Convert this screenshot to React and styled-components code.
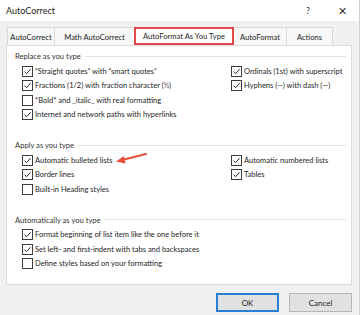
import styled, { createGlobalStyle } from "styled-components";

const GlobalStyle = createGlobalStyle`
  html, body {
    margin: 0;
    padding: 0;
    background: #f0f0f0;
  }
`;

const Window = styled.div`
  position: relative;
  width: 360px;
  height: 315px;
  overflow: hidden;
  background: #f0f0f0;
  font-family: "Segoe UI", Lato, "Open Sans", sans-serif;
  color: #1e1e1e;
  border-right: 1px solid #d0d0d0;
  box-sizing: border-box;
`;

const TitleBar = styled.div`
  display: flex;
  align-items: center;
  height: 21px;
  padding: 0 0 0 6px;
  background: #fff;
  font-size: 9px;
`;

const Title = styled.div`
  flex-grow: 1;
`;

const TitleButton = styled.div`
  width: 34px;
  text-align: center;
  font-size: ${(props) => props.size || 9}px;
  color: #333;
`;

const Body = styled.div`
  padding: 6px 7px 0 6px;
`;

const TabRow = styled.div`
  display: flex;
  height: 18px;
  padding-left: 2px;
`;

const Tab = styled.div`
  display: flex;
  align-items: center;
  justify-content: center;
  width: ${(props) => props.width}px;
  box-sizing: border-box;
  font-size: 7.6px;
  background: ${(props) => (props.active ? "#fff" : "#f7f7f7")};
  border: 1px solid #d9d9d9;
  border-bottom: none;
  margin-left: -1px;
  ${(props) =>
    props.active &&
    `
    border: 2px solid #e2474c;
    position: relative;
    z-index: 1;
  `}
`;

const Panel = styled.div`
  position: relative;
  height: 240px;
  box-sizing: border-box;
  background: #fff;
  border: 1px solid #dcdcdc;
  padding: 4px 5px 0 8px;
`;

const Section = styled.div`
  margin-bottom: 17px;
`;

const Header = styled.div`
  display: flex;
  align-items: center;
  height: 12px;
  font-size: 7.6px;
  color: #333;

  &::after {
    content: "";
    flex-grow: 1;
    height: 1px;
    margin-left: 4px;
    background: #e3e3e3;
  }
`;

const Rows = styled.div`
  display: grid;
  grid-template-columns: 209px 1fr;
  grid-auto-rows: 14.5px;
  margin-top: 2px;
  padding-left: 7px;
`;

const Row = styled.div`
  display: flex;
  align-items: center;
  gap: 2px;
  font-size: 7.5px;
  white-space: nowrap;
  grid-column: ${(props) => props.col};
  grid-row: ${(props) => props.row};
`;

const Box = styled.div`
  flex-shrink: 0;
  width: 9px;
  height: 9px;
  border: 1px solid #3c3c3c;
  background: #fff;
  display: flex;
  align-items: center;
  justify-content: center;
`;

const Footer = styled.div`
  display: flex;
  justify-content: flex-end;
  gap: 10px;
  padding-top: 8px;
`;

const Button = styled.div`
  display: flex;
  align-items: center;
  justify-content: center;
  width: 63px;
  height: 19px;
  box-sizing: border-box;
  font-size: 8px;
  background: #e1e1e1;
  border: ${(props) => (props.primary ? "2px solid #2b7fd0" : "1px solid #b5b5b5")};
`;

const Arrow = styled.svg`
  position: absolute;
  left: 113px;
  top: 150px;
`;

const CheckBox = ({ checked }) => (
  <Box>
    {checked && (
      <svg width="9" height="9" viewBox="0 0 9 9">
        <path d="M1.5 4.6 L3.6 6.7 L7.6 2.2" fill="none" stroke="#2a2a2a" strokeWidth="1" />
      </svg>
    )}
  </Box>
);

const sections = [
  {
    title: "Replace as you type",
    items: [
      { label: "\u201CStraight quotes\u201D with \u201Csmart quotes\u201D", checked: true, col: 1, row: 1 },
      { label: "Fractions (1/2) with fraction character (\u00BD)", checked: true, col: 1, row: 2 },
      { label: "*Bold* and _italic_ with real formatting", checked: false, col: 1, row: 3 },
      { label: "Internet and network paths with hyperlinks", checked: true, col: 1, row: 4 },
      { label: "Ordinals (1st) with superscript", checked: true, col: 2, row: 1 },
      { label: "Hyphens (--) with dash (\u2014)", checked: true, col: 2, row: 2 },
    ],
  },
  {
    title: "Apply as you type",
    items: [
      { label: "Automatic bulleted lists", checked: true, col: 1, row: 1 },
      { label: "Border lines", checked: true, col: 1, row: 2 },
      { label: "Built-in Heading styles", checked: false, col: 1, row: 3 },
      { label: "Automatic numbered lists", checked: true, col: 2, row: 1 },
      { label: "Tables", checked: true, col: 2, row: 2 },
    ],
  },
  {
    title: "Automatically as you type",
    items: [
      { label: "Format beginning of list item like the one before it", checked: true, col: 1, row: 1 },
      { label: "Set left- and first-indent with tabs and backspaces", checked: true, col: 1, row: 2 },
      { label: "Define styles based on your formatting", checked: false, col: 1, row: 3 },
    ],
  },
];

const tabs = [
  { label: "AutoCorrect", width: 48 },
  { label: "Math AutoCorrect", width: 81 },
  { label: "AutoFormat As You Type", width: 100, active: true },
  { label: "AutoFormat", width: 54 },
  { label: "Actions", width: 47 },
];

const App = () => {
  return (
    <>
      <GlobalStyle />
      <Window>
        <TitleBar>
          <Title>AutoCorrect</Title>
          <TitleButton>?</TitleButton>
          <TitleButton size={11}>✕</TitleButton>
        </TitleBar>

        <Body>
          <TabRow>
            {tabs.map((tab) => (
              <Tab key={tab.label} width={tab.width} active={tab.active}>
                {tab.label}
              </Tab>
            ))}
          </TabRow>

          <Panel>
            {sections.map((section) => (
              <Section key={section.title}>
                <Header>{section.title}</Header>
                <Rows>
                  {section.items.map((item) => (
                    <Row key={item.label} col={item.col} row={item.row}>
                      <CheckBox checked={item.checked} />
                      {item.label}
                    </Row>
                  ))}
                </Rows>
              </Section>
            ))}
          </Panel>

          <Footer>
            <Button primary>OK</Button>
            <Button>Cancel</Button>
          </Footer>
        </Body>

        {/* annotation arrow */}
        <Arrow width="40" height="16" viewBox="0 0 40 16">
          <path d="M33 4 L9 10" stroke="#e8503a" strokeWidth="2.2" strokeLinecap="round" />
          <path d="M3 11.5 L11 6 L12.5 13.5 Z" fill="#e8503a" />
        </Arrow>
      </Window>
    </>
  );
};

export default App;
